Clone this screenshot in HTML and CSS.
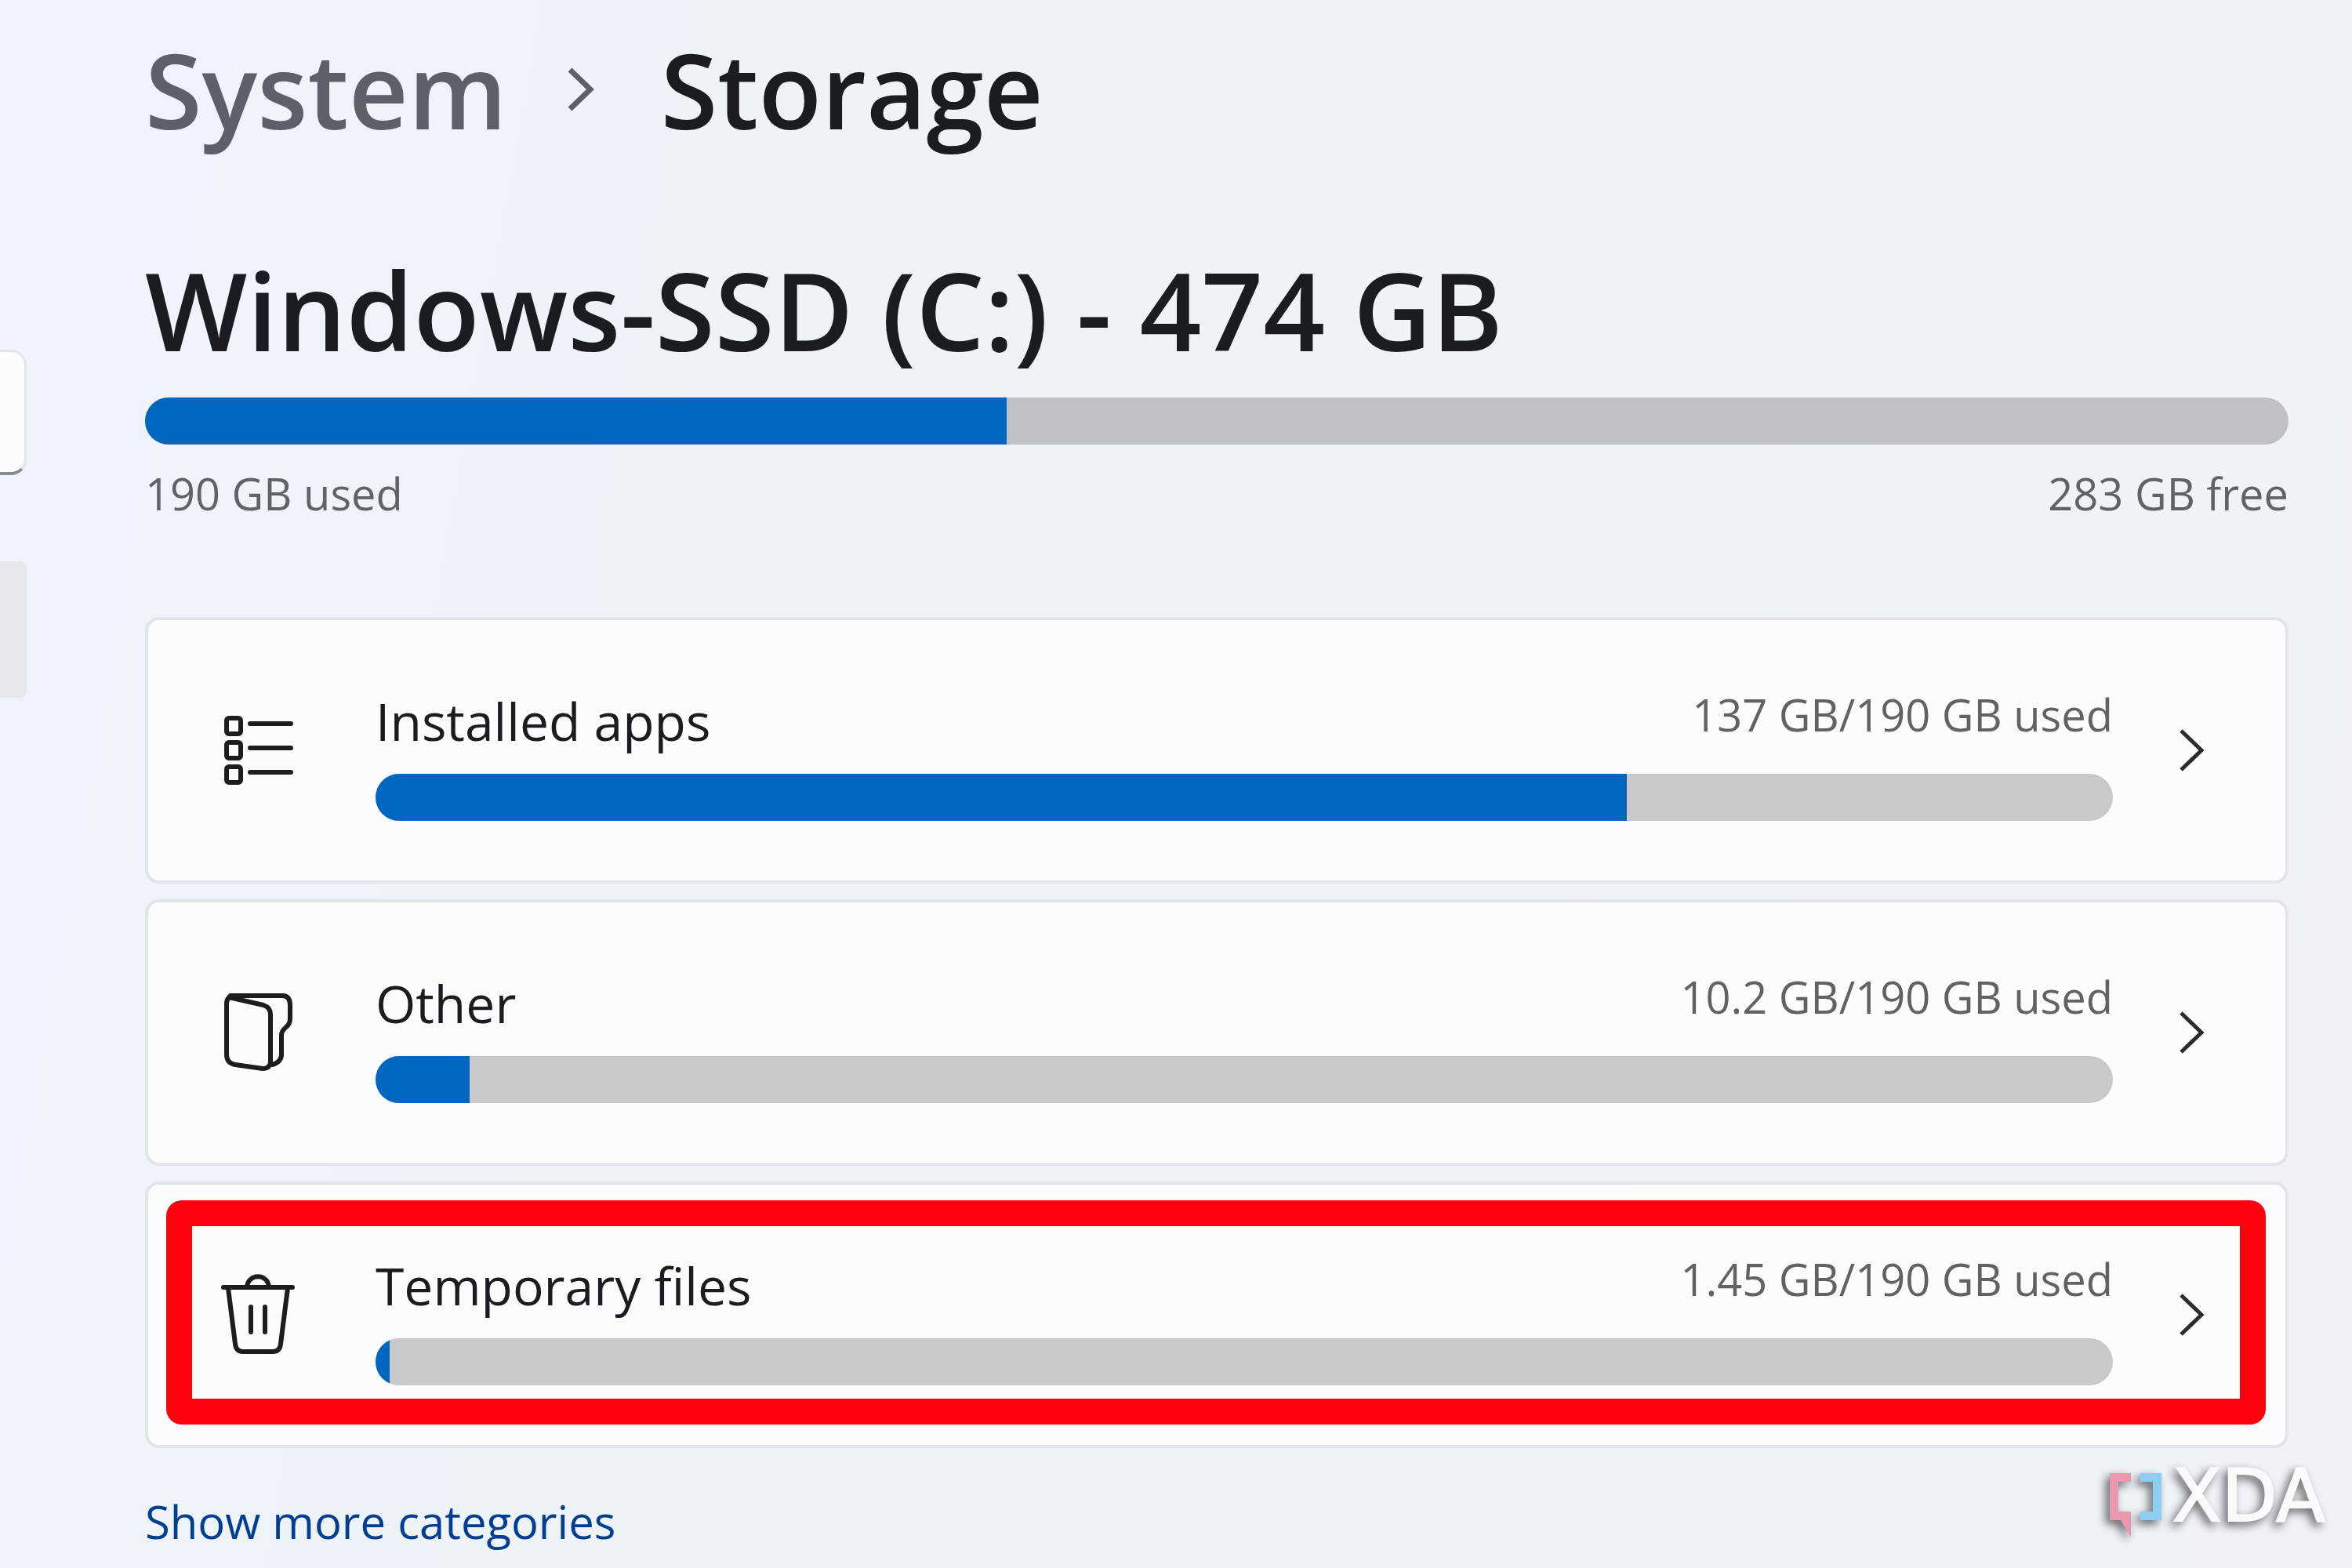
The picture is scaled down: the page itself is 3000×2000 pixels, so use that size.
FILE: index.html
```html
<!DOCTYPE html>
<html lang="en">

<head>
    <meta charset="UTF-8">
    <meta name="viewport" content="width=device-width, initial-scale=1.0">
    <title>Storage</title>
    <link rel="stylesheet" href="styles.css">
</head>
<body>

    <aside class="sidebar">
        <input class="search" type="text" aria-label="Find a setting">
        <a class="nav-item" href="#" aria-label="System"></a>
    </aside>

    <main class="page">
        <nav class="breadcrumb">
            <a href="#">System</a>
            <svg class="crumb-arrow" viewBox="0 0 36 60"><path d="M4 5 L30 30 L4 55"/></svg>
            <h1>Storage</h1>
        </nav>

        <h2 class="drive-name">Windows-SSD (C:) - 474 GB</h2>
        <div class="bar drive-bar"><div class="fill" style="width: 40.2%"></div></div>
        <div class="drive-info">
            <span>190 GB used</span>
            <span>283 GB free</span>
        </div>

        <div class="cards">
            <a class="card" href="#">
                <svg class="icon" viewBox="0 0 96 104">
                    <rect x="7" y="11" width="18" height="20" rx="3"/>
                    <rect x="7" y="42" width="18" height="20" rx="3"/>
                    <rect x="7" y="73" width="18" height="20" rx="3"/>
                    <path d="M37 18 H89 M37 49 H89 M37 80 H89"/>
                </svg>
                <div class="info">
                    <div class="info-head">
                        <span class="name">Installed apps</span>
                        <span class="used">137 GB/190 GB used</span>
                    </div>
                    <div class="bar"><div class="fill" style="width: 72%"></div></div>
                </div>
                <svg class="arrow" viewBox="0 0 36 60"><path d="M4 5 L30 30 L4 55"/></svg>
            </a>

            <a class="card" href="#">
                <svg class="icon" viewBox="0 0 96 104">
                    <path d="M12 5 H78 Q88 5 88 17 V34 Q88 41 83 45 Q77 50 77 55 V80 Q77 89 66 93"/>
                    <path d="M10 7 L54 17 Q63 20 63 29 V90 Q62 98 53 98 L18 93 Q7 91 7 80 V16 Q7 7 14 5"/>
                </svg>
                <div class="info">
                    <div class="info-head">
                        <span class="name">Other</span>
                        <span class="used">10.2 GB/190 GB used</span>
                    </div>
                    <div class="bar"><div class="fill" style="width: 5.4%"></div></div>
                </div>
                <svg class="arrow" viewBox="0 0 36 60"><path d="M4 5 L30 30 L4 55"/></svg>
            </a>

            <a class="card highlighted" href="#">
                <svg class="icon" viewBox="0 0 96 104">
                    <path d="M3 17 H91 M33 16 C35 -1 59 -1 61 16"/>
                    <path d="M9 18 L18 89 Q19 99 28 99 H66 Q75 99 76 89 L85 18"/>
                    <path d="M38 42 V74 M56 42 V74"/>
                </svg>
                <div class="info">
                    <div class="info-head">
                        <span class="name">Temporary files</span>
                        <span class="used">1.45 GB/190 GB used</span>
                    </div>
                    <div class="bar"><div class="fill" style="width: 0.8%"></div></div>
                </div>
                <svg class="arrow" viewBox="0 0 36 60"><path d="M4 5 L30 30 L4 55"/></svg>
            </a>
        </div>

        <a class="more" href="#">Show more categories</a>
    </main>

    <div class="watermark">
        <svg viewBox="0 0 66 82">
            <path fill="#e998ae" d="M0 0 H27 V11 H11 V49 H27 V82 L14 60 H0 Z"/>
            <path fill="#8dcdef" d="M39 0 H66 V60 H39 V49 H55 V11 H39 Z"/>
        </svg>
        <span>XDA</span>
    </div>

</body>

</html>
```
FILE: styles.css
```css
* {
    box-sizing: border-box;
}

body {
    display: flex;
    margin: 0;
    min-height: 100vh;
    position: relative;
    font-family: 'Open Sans', 'Noto Sans', sans-serif;
    color: #191c20;
    background: linear-gradient(100deg, #eff3fc 0%, #eef3f8 30%, #eff3f8 100%);
}

a {
    color: inherit;
    text-decoration: none;
}

svg {
    fill: none;
    flex-shrink: 0;
}

/* only the right edge of the sidebar is visible */
.sidebar {
    width: 34px;
    padding-top: 446px;
    flex-shrink: 0;
}

.search {
    display: block;
    width: 100%;
    height: 160px;
    border: 3px solid #e2e6e9;
    border-left: none;
    border-bottom: 4px solid #888b8d;
    border-radius: 0 20px 20px 0;
    background-color: #fafdff;
}

.nav-item {
    display: block;
    height: 174px;
    margin-top: 110px;
    border-radius: 0 8px 8px 0;
    background-color: #e5e8ec;
}

.page {
    flex: 1;
    padding: 24px 81px 0 151px;
}

.breadcrumb {
    display: flex;
    align-items: center;
    font-size: 132px;
    font-weight: 600;
    line-height: 180px;
    color: #5c6068;
}

.breadcrumb h1 {
    margin: 0;
    font-size: inherit;
    font-weight: inherit;
    color: #191c20;
}

.crumb-arrow {
    width: 36px;
    height: 60px;
    margin: 0 84px 0 76px;
    stroke: #5c6068;
    stroke-width: 7;
}

.drive-name {
    margin: 100px 0 23px;
    font-size: 138px;
    font-weight: 600;
    line-height: 180px;
}

.bar {
    height: 60px;
    border-radius: 30px;
    overflow: hidden;
    background-color: #c9c9cb;
}

.drive-bar {
    background-color: #bec1c6;
}

.fill {
    height: 100%;
    background-color: #0067c0;
}

.drive-info {
    display: flex;
    justify-content: space-between;
    margin-top: 22px;
    font-size: 56px;
    line-height: 80px;
    color: #606366;
}

.cards {
    display: flex;
    flex-direction: column;
    gap: 20px;
    margin-top: 118px;
}

.card {
    display: flex;
    align-items: center;
    position: relative;
    padding: 76px 101px 76px 93px;
    border: 4px solid #e2e6ea;
    border-radius: 18px;
    background-color: #fbfcfe;
}

.icon {
    width: 96px;
    height: 104px;
    stroke: #1b1d1f;
    stroke-width: 6;
    stroke-linecap: round;
    stroke-linejoin: round;
}

.info {
    flex: 1;
    margin: 0 83px 0 101px;
    padding-top: 4px;
}

.info-head {
    display: flex;
    justify-content: space-between;
    align-items: flex-start;
    margin-bottom: 20px;
}

.name {
    font-size: 66px;
    line-height: 96px;
}

.used {
    font-size: 56px;
    line-height: 80px;
    color: #606366;
}

.arrow {
    width: 36px;
    height: 60px;
    stroke: #2b2d30;
    stroke-width: 5;
}

/* red frame around the temporary files row */
.highlighted::after {
    content: '';
    position: absolute;
    top: 20px;
    right: 25px;
    bottom: 26px;
    left: 23px;
    border: 33px solid #ff000d;
    border-radius: 20px;
}

.more {
    display: inline-block;
    margin-top: 54px;
    font-size: 58px;
    line-height: 80px;
    color: #003e92;
}

.watermark {
    display: flex;
    align-items: flex-start;
    gap: 14px;
    position: absolute;
    right: 34px;
    bottom: 39px;
    filter: drop-shadow(-5px 5px 6px rgba(0, 0, 0, 0.6));
}

.watermark svg {
    width: 66px;
    height: 82px;
}

.watermark span {
    font-family: 'DejaVu Sans', sans-serif;
    font-size: 92px;
    line-height: 60px;
    color: #f8fafc;
    -webkit-text-stroke: 2px #f8fafc;
}
```
